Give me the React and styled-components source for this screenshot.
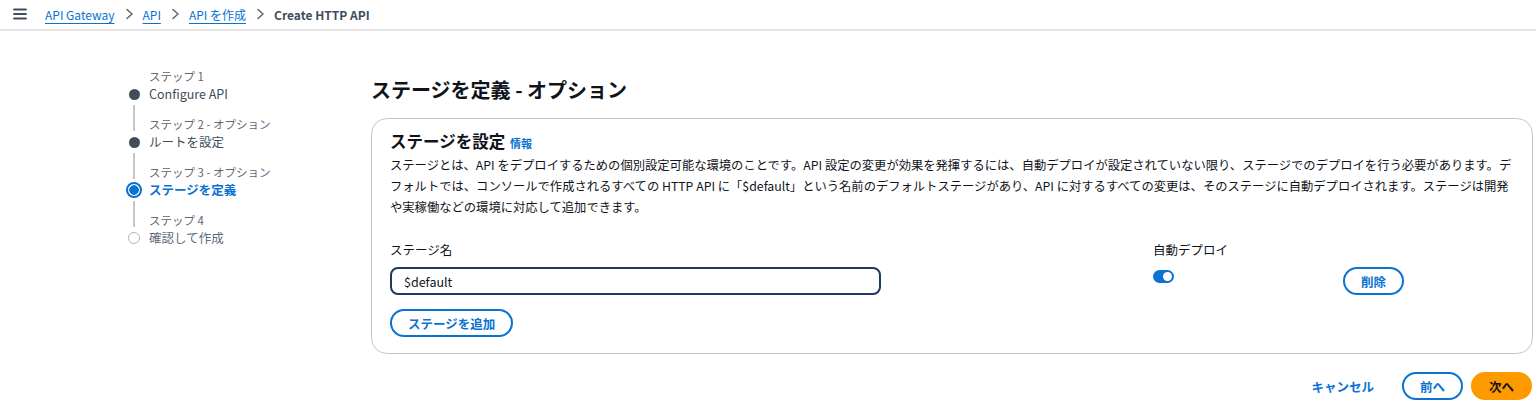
import React from "react";
import styled, { createGlobalStyle } from "styled-components";

const GlobalStyle = createGlobalStyle`
  body {
    margin: 0;
    background: #ffffff;
    font-family: "Noto Sans CJK JP", "Noto Sans", sans-serif;
    color: #0f141a;
  }
  * { box-sizing: border-box; }
`;

// パンくず
const crumbs = [
  { label: "API Gateway", link: true },
  { label: "API", link: true },
  { label: "API を作成", link: true },
  { label: "Create HTTP API", link: false },
];

// ステップ一覧
const steps = [
  { num: "ステップ 1", title: "Configure API", state: "done" },
  { num: "ステップ 2 - オプション", title: "ルートを設定", state: "done" },
  { num: "ステップ 3 - オプション", title: "ステージを定義", state: "active" },
  { num: "ステップ 4", title: "確認して作成", state: "todo" },
];

const Chevron = () => (
  <svg width="9" height="12" viewBox="0 0 9 12" fill="none">
    <path d="M2 1.5l5 4.5-5 4.5" stroke="#656871" strokeWidth="1.6" strokeLinecap="round" strokeLinejoin="round" />
  </svg>
);

const Hamburger = () => (
  <svg width="14" height="12" viewBox="0 0 14 12" fill="none">
    <path d="M1 1.5h12M1 6h12M1 10.5h12" stroke="#414d5c" strokeWidth="1.8" strokeLinecap="round" />
  </svg>
);

const App = () => {
  return (
    <>
      <GlobalStyle />
      <TopBar>
        <MenuButton>
          <Hamburger />
        </MenuButton>
        <Crumbs>
          {crumbs.map((c, idx) => (
            <React.Fragment key={`crumb_${idx}`}>
              {idx > 0 && (
                <Sep>
                  <Chevron />
                </Sep>
              )}
              <Crumb $link={c.link}>{c.label}</Crumb>
            </React.Fragment>
          ))}
        </Crumbs>
      </TopBar>

      <Page>
        <SideNav>
          {steps.map((s, idx) => (
            <Step key={`step_${idx}`}>
              <RailTop $hidden={idx === 0} />
              <StepNum>{s.num}</StepNum>
              <DotCell>
                <Dot $state={s.state} />
              </DotCell>
              <StepTitle $state={s.state}>{s.title}</StepTitle>
              <RailBottom $hidden={idx === steps.length - 1} />
            </Step>
          ))}
        </SideNav>

        <Main>
          <Heading>ステージを定義 - オプション</Heading>
          <Card>
            <CardTitle>
              ステージを設定 <Info>情報</Info>
            </CardTitle>
            <Description>
              ステージとは、API をデプロイするための個別設定可能な環境のことです。API 設定の変更が効果を発揮するには、自動デプロイが設定されていない限り、ステージでのデプロイを行う必要があります。デフォルトでは、コンソールで作成されるすべての HTTP API に「$default」という名前のデフォルトステージがあり、API に対するすべての変更は、そのステージに自動デプロイされます。ステージは開発や実稼働などの環境に対応して追加できます。
            </Description>

            <StageGrid>
              <FieldLabel>ステージ名</FieldLabel>
              <FieldLabel>自動デプロイ</FieldLabel>
              <span />
              <Input defaultValue="$default" />
              <ToggleCell>
                <Toggle $on>
                  <Knob />
                </Toggle>
              </ToggleCell>
              <Button>削除</Button>
            </StageGrid>

            <AddRow>
              <Button>ステージを追加</Button>
            </AddRow>
          </Card>

          <Footer>
            <LinkButton>キャンセル</LinkButton>
            <Button>前へ</Button>
            <Button $primary>次へ</Button>
          </Footer>
        </Main>
      </Page>
    </>
  );
};

const TopBar = styled.div`
  display: flex;
  align-items: center;
  height: 31px;
  padding: 0 0 1px 13px;
  border-bottom: 2px solid #e4e4e6;
`;

const MenuButton = styled.div`
  display: flex;
  align-items: center;
  width: 32px;
`;

const Crumbs = styled.div`
  display: flex;
  align-items: center;
  font-size: 12px;
`;

const Sep = styled.span`
  display: flex;
  align-items: center;
  margin: 0 9px 0 10px;
`;

const Crumb = styled.span`
  color: ${(p) => (p.$link ? "#0972d3" : "#414d5c")};
  font-weight: ${(p) => (p.$link ? 400 : 700)};
  text-decoration: ${(p) => (p.$link ? "underline" : "none")};
  text-underline-offset: 3px;
`;

const Page = styled.div`
  display: flex;
  padding: 36px 3px 0 124px;
`;

const SideNav = styled.div`
  width: 247px;
  flex-shrink: 0;
`;

const Step = styled.div`
  display: grid;
  grid-template-columns: 25px 1fr;
  grid-template-rows: 18px 18px 12px;
`;

const RailTop = styled.div`
  width: 2px;
  margin: 0 0 2px 9px;
  background: ${(p) => (p.$hidden ? "transparent" : "#c6c6cd")};
`;

const RailBottom = styled.div`
  width: 2px;
  margin: 2px 0 0 9px;
  background: ${(p) => (p.$hidden ? "transparent" : "#c6c6cd")};
`;

const DotCell = styled.div`
  display: flex;
  align-items: center;
  justify-content: center;
  width: 20px;
`;

const Dot = styled.div`
  border-radius: 50%;
  ${(p) =>
    p.$state === "done"
      ? "width: 11px; height: 11px; background: #414d5c;"
      : p.$state === "active"
      ? "width: 16px; height: 16px; border: 2px solid #0972d3; background: radial-gradient(circle, #0972d3 0 4.5px, #fff 5px);"
      : "width: 12px; height: 12px; border: 1.5px solid #b4b4bb; background: #fff;"}
`;

const StepNum = styled.div`
  font-size: 11.5px;
  line-height: 18px;
  color: #656871;
`;

const StepTitle = styled.div`
  font-size: 12.5px;
  line-height: 18px;
  font-weight: ${(p) => (p.$state === "active" ? 700 : 400)};
  color: ${(p) =>
    p.$state === "active" ? "#0972d3" : p.$state === "todo" ? "#5f6b7a" : "#414d5c"};
`;

const Main = styled.div`
  flex: 1;
  min-width: 0;
`;

const Heading = styled.h1`
  margin: 10px 0 15px;
  font-size: 20px;
  line-height: 26px;
  font-weight: 700;
  color: #0f141a;
`;

const Card = styled.div`
  border: 1px solid #c6c6cd;
  border-radius: 16px;
  padding: 12px 17px 16px 18px;
`;

const CardTitle = styled.h2`
  margin: 0;
  font-size: 16.5px;
  line-height: 21px;
  font-weight: 700;
  color: #0f141a;
`;

const Info = styled.span`
  font-size: 11px;
  font-weight: 700;
  color: #0972d3;
  margin-left: 1px;
`;

const Description = styled.p`
  margin: 1px 0 0;
  font-size: 12.3px;
  line-height: 21px;
  color: #0f141a;
`;

const StageGrid = styled.div`
  display: grid;
  grid-template-columns: 763px 190px auto;
  grid-template-rows: 18px 28px;
  row-gap: 8px;
  margin-top: 23px;
`;

const FieldLabel = styled.div`
  font-size: 12.5px;
  line-height: 18px;
  color: #0f141a;
`;

const Input = styled.input`
  width: 491px;
  height: 28px;
  padding: 0 12px;
  border: 2px solid #1f3a5f;
  border-radius: 8px;
  font-family: inherit;
  font-size: 12.5px;
  color: #0f141a;
  outline: none;
`;

const ToggleCell = styled.div`
  padding-top: 3px;
`;

const Toggle = styled.div`
  display: flex;
  align-items: center;
  justify-content: ${(p) => (p.$on ? "flex-end" : "flex-start")};
  width: 21px;
  height: 13px;
  padding: 0 2px;
  border-radius: 8px;
  background: ${(p) => (p.$on ? "#0972d3" : "#8c8c94")};
`;

const Knob = styled.div`
  width: 9px;
  height: 9px;
  border-radius: 50%;
  background: #fff;
`;

const Button = styled.button`
  height: 28px;
  padding: 0 16px;
  border: 2px solid ${(p) => (p.$primary ? "#ff9900" : "#0972d3")};
  border-radius: 20px;
  background: ${(p) => (p.$primary ? "#ff9900" : "#fff")};
  color: ${(p) => (p.$primary ? "#0f141a" : "#0972d3")};
  font-family: inherit;
  font-size: 12.5px;
  font-weight: 700;
  white-space: nowrap;
  justify-self: start;
`;

const AddRow = styled.div`
  display: flex;
  margin-top: 14px;
`;

const Footer = styled.div`
  display: flex;
  align-items: center;
  justify-content: flex-end;
  gap: 8px;
  margin-top: 18px;
  padding-right: 1px;
`;

const LinkButton = styled.span`
  margin-right: 20px;
  font-size: 12.5px;
  font-weight: 700;
  color: #0972d3;
`;

export default App;
